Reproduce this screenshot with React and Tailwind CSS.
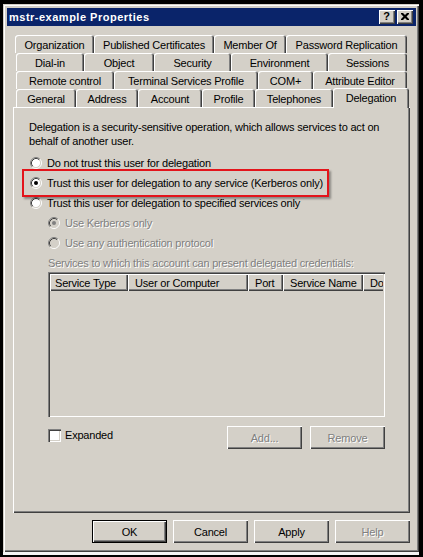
import React from "react";

const raised =
  "bg-[#D4D0C8] shadow-[inset_1px_1px_0_#fff,inset_-1px_-1px_0_#404040,inset_-2px_-2px_0_#808080]";
const dimText = "text-[#808080] [text-shadow:1px_1px_0_#fff]";

const tabRows = [
  {
    cls: "ml-[2px]",
    tabs: [
      { label: "Organization", w: "w-[79px]" },
      { label: "Published Certificates", w: "w-[120px]" },
      { label: "Member Of", w: "w-[72px]" },
      { label: "Password Replication", w: "w-[121px]" },
    ],
  },
  {
    cls: "ml-[3px]",
    tabs: [
      { label: "Dial-in", w: "w-[68px]" },
      { label: "Object", w: "w-[70px]" },
      { label: "Security", w: "w-[77px]" },
      { label: "Environment", w: "w-[97px]" },
      { label: "Sessions", w: "w-[79px]" },
    ],
  },
  {
    cls: "ml-[3px]",
    tabs: [
      { label: "Remote control", w: "w-[98px]" },
      { label: "Terminal Services Profile", w: "w-[144px]" },
      { label: "COM+", w: "w-[55px]" },
      { label: "Attribute Editor", w: "w-[94px]" },
    ],
  },
];

const lastRow = [
  { label: "General", w: "w-[60px]" },
  { label: "Address", w: "w-[62px]" },
  { label: "Account", w: "w-[64px]" },
  { label: "Profile", w: "w-[53px]" },
  { label: "Telephones", w: "w-[78px]" },
];

const columns = [
  { label: "Service Type", w: "w-[78px] pl-[5px]" },
  { label: "User or Computer", w: "w-[120px] pl-[7px]" },
  { label: "Port", w: "w-[35px] pl-[7px]" },
  { label: "Service Name", w: "w-[80px] pl-[7px]" },
  { label: "Domain", w: "w-[40px] pl-[7px]" },
];

function Tab({ label, w }) {
  return (
    <div
      className={`${w} h-[18px] shrink-0 flex items-center justify-center pt-[1px] rounded-t-[3px] bg-[#D4D0C8] shadow-[inset_1px_1px_0_#fff,inset_-1px_0_0_#404040,inset_-2px_0_0_#808080] whitespace-nowrap`}
    >
      {label}
    </div>
  );
}

function Radio({ checked, disabled }) {
  return (
    <svg width="12" height="12" viewBox="0 0 12 12" className="shrink-0">
      <circle cx="6" cy="6" r="4.5" fill={disabled ? "#D4D0C8" : "#fff"} />
      <path d="M2.11 9.89A5.5 5.5 0 0 1 9.89 2.11" stroke="#808080" fill="none" />
      <path d="M9.89 2.11A5.5 5.5 0 0 1 2.11 9.89" stroke="#fff" fill="none" />
      <path d="M2.82 9.18A4.5 4.5 0 0 1 9.18 2.82" stroke="#404040" fill="none" />
      <path d="M9.18 2.82A4.5 4.5 0 0 1 2.82 9.18" stroke="#D4D0C8" fill="none" />
      {checked && (
        <circle cx="6" cy="6" r="2" fill={disabled ? "#808080" : "#000"} />
      )}
    </svg>
  );
}

function Button({ children, isDefault, disabled, className = "" }) {
  const frame = isDefault
    ? "border border-black bg-[#D4D0C8] shadow-[inset_1px_1px_0_#fff,inset_-1px_-1px_0_#404040,inset_-2px_-2px_0_#808080]"
    : raised;
  return (
    <div
      className={`w-[75px] h-[23px] flex items-center justify-center ${frame} ${
        disabled ? dimText : "text-black"
      } ${className}`}
    >
      {children}
    </div>
  );
}

export default function App() {
  return (
    <div
      className="w-[423px] h-[557px] bg-black overflow-hidden text-[11px] leading-[14px] text-black tracking-[-0.2px]"
      style={{ fontFamily: '"Liberation Sans", Arial, sans-serif' }}
    >
      {/* dialog window */}
      <div className="ml-[3px] mt-[4px] w-[416px] h-[548px] bg-[#D4D0C8] pt-[4px] pl-[4px] pr-[3px] shadow-[inset_1px_1px_0_#D4D0C8,inset_2px_2px_0_#fff,inset_-1px_-1px_0_#404040,inset_-2px_-2px_0_#808080]">
        {/* caption bar */}
        <div className="h-[18px] bg-[#0A246A] flex items-center pl-[2px] pr-[3px]">
          <span className="text-white font-bold tracking-[0.5px]">
            mstr-example Properties
          </span>
          <div className="ml-auto flex gap-[2px]">
            <div
              className={`w-[16px] h-[14px] ${raised} flex items-center justify-center font-bold text-[11px] leading-none pb-[1px] pr-[1px]`}
            >
              ?
            </div>
            <div
              className={`w-[16px] h-[14px] ${raised} flex items-center justify-center pb-[1px] pr-[1px]`}
            >
              <svg width="8" height="7" viewBox="0 0 8 7">
                <path d="M0 0h2l2 2 2-2h2v1L5.5 3.5 8 6v1H6L4 5 2 7H0V6l2.5-2.5L0 1z" fill="#000" />
              </svg>
            </div>
          </div>
        </div>

        <div className="pl-[6px] pt-[9px]">
          {/* tab strip */}
          {tabRows.map((row, i) => (
            <div key={i} className={`flex ${row.cls}`}>
              {row.tabs.map((t) => (
                <Tab key={t.label} {...t} />
              ))}
            </div>
          ))}
          <div className="flex items-end h-[18px] ml-[3px]">
            {lastRow.map((t) => (
              <Tab key={t.label} {...t} />
            ))}
            <div className="relative z-10 w-[76px] h-[20px] -mb-[1px] shrink-0 flex items-start justify-center pt-[3px] rounded-t-[3px] bg-[#D4D0C8] shadow-[inset_1px_1px_0_#fff,inset_-1px_0_0_#404040,inset_-2px_0_0_#808080]">
              Delegation
            </div>
          </div>

          {/* property page */}
          <div className="w-[397px] h-[406px] pl-[16px] pt-[13px] shadow-[inset_1px_1px_0_#fff,inset_-1px_-1px_0_#404040,inset_-2px_-2px_0_#808080]">
            <p className="whitespace-nowrap">
              Delegation is a security-sensitive operation, which allows services to act on
              <br />
              behalf of another user.
            </p>

            <div className="mt-[5px]">
              <div className="h-[20px] flex items-center gap-[5px] pl-[1px]">
                <Radio />
                <span>Do not trust this user for delegation</span>
              </div>
              <div className="relative h-[20px] flex items-center gap-[5px] pl-[1px]">
                <Radio checked />
                <span>Trust this user for delegation to any service (Kerberos only)</span>
                <div className="absolute left-[-7px] top-[-4px] w-[307px] h-[28px] border-2 border-[#E3141B] shadow-[2px_2px_2px_rgba(0,0,0,0.35)]" />
              </div>
              <div className="h-[20px] flex items-center gap-[5px] pl-[1px]">
                <Radio />
                <span>Trust this user for delegation to specified services only</span>
              </div>
              <div className="h-[20px] flex items-center gap-[5px] pl-[19px]">
                <Radio checked disabled />
                <span className={dimText}>Use Kerberos only</span>
              </div>
              <div className="h-[20px] flex items-center gap-[5px] pl-[19px]">
                <Radio disabled />
                <span className={dimText}>Use any authentication protocol</span>
              </div>
            </div>

            <div className={`mt-[3px] ml-[19px] whitespace-nowrap ${dimText}`}>
              Services to which this account can present delegated credentials:
            </div>

            {/* services list view */}
            <div className="ml-[19px] mt-[2px] w-[337px] h-[145px] p-[2px] shadow-[inset_1px_1px_0_#808080,inset_2px_2px_0_#404040,inset_-1px_-1px_0_#fff,inset_-2px_-2px_0_#D4D0C8]">
              <div className="flex h-[17px] overflow-hidden">
                {columns.map((c) => (
                  <div
                    key={c.label}
                    className={`${c.w} shrink-0 h-full flex items-center whitespace-nowrap ${raised}`}
                  >
                    {c.label}
                  </div>
                ))}
              </div>
            </div>

            <div className="ml-[19px] mt-[9px] w-[337px] flex items-start">
              <div className="mt-[2px] flex items-center gap-[4px]">
                <div className="w-[13px] h-[13px] bg-white shadow-[inset_1px_1px_0_#808080,inset_2px_2px_0_#404040,inset_-1px_-1px_0_#fff,inset_-2px_-2px_0_#D4D0C8]" />
                <span>Expanded</span>
              </div>
              <div className="ml-auto flex gap-[8px]">
                <Button disabled>Add...</Button>
                <Button disabled>Remove</Button>
              </div>
            </div>
          </div>

          {/* dialog buttons */}
          <div className="w-[397px] mt-[7px] flex justify-end gap-[6px]">
            <Button isDefault>OK</Button>
            <Button>Cancel</Button>
            <Button>Apply</Button>
            <Button disabled>Help</Button>
          </div>
        </div>
      </div>
      <div className="ml-[3px] w-[416px] h-[3px] bg-[#f4f4f4]" />
    </div>
  );
}
